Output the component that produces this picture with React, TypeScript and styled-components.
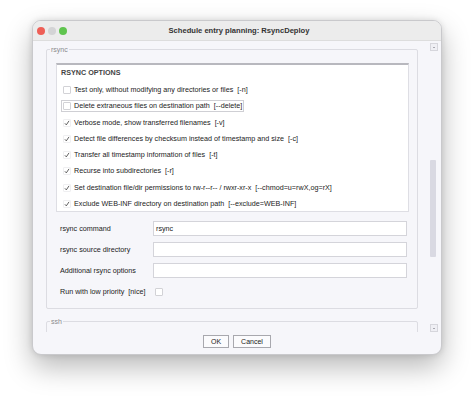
import React from 'react';
import styled, { createGlobalStyle } from 'styled-components';

const GlobalStyle = createGlobalStyle`
  html, body {
    margin: 0;
    padding: 0;
    background: #ffffff;
  }
  body {
    font-family: "Liberation Sans", Arial, sans-serif;
    color: #222;
  }
`;

const Stage = styled.div`
  width: 474px;
  height: 397px;
  padding: 20px 0 0 32px;
  box-sizing: border-box;
`;

const Window = styled.div`
  width: 410px;
  height: 335px;
  border-radius: 9px;
  overflow: hidden;
  border: 1px solid #c9c9cc;
  box-sizing: border-box;
  background: #f6f6fa;
  box-shadow: 0 12px 28px rgba(0, 0, 0, 0.28), 0 0 6px rgba(0, 0, 0, 0.12);
  display: flex;
  flex-direction: column;
`;

const TitleBar = styled.div`
  height: 19px;
  flex: none;
  background: #ececec;
  border-bottom: 1px solid #dddddd;
  display: flex;
  align-items: center;
  padding-left: 4px;
`;

const Lights = styled.div`
  display: flex;
  gap: 3px;
`;

const Light = styled.span<{ $c: string }>`
  width: 8px;
  height: 8px;
  border-radius: 50%;
  background: ${(p) => p.$c};
`;

const Title = styled.div`
  flex: 1;
  text-align: center;
  font-weight: bold;
  font-size: 7.6px;
  color: #333;
  margin-right: 30px;
`;

const Body = styled.div`
  flex: 1;
  display: flex;
  flex-direction: column;
  min-height: 0;
`;

const ScrollArea = styled.div`
  flex: 1;
  display: flex;
  min-height: 0;
  overflow: hidden;
`;

const Content = styled.div`
  flex: 1;
  padding: 8px 0 0 13px;
  display: flex;
  flex-direction: column;
  gap: 12px;
`;

const Group = styled.div`
  width: 372px;
  border: 1px solid #dcdce2;
  border-radius: 2px;
  position: relative;
  padding: 13px 8px 9px 9px;
  box-sizing: border-box;
  flex: none;
`;

const GroupLabel = styled.span`
  position: absolute;
  top: -5px;
  left: 3px;
  padding: 0 1px;
  background: #f6f6fa;
  font-size: 7px;
  color: #8a8a8e;
  line-height: 9px;
`;

const OptionsPanel = styled.div`
  background: #ffffff;
  border: 1px solid #dedee4;
  border-top: 2px solid #b8b8be;
  height: 149px;
  box-sizing: border-box;
  padding: 2px 4px 0 4px;
`;

const PanelTitle = styled.div`
  font-size: 7.2px;
  font-weight: bold;
  color: #444;
  height: 12px;
  line-height: 12px;
  margin-bottom: 5px;
`;

const OptionRow = styled.div<{ $focus?: boolean }>`
  display: flex;
  align-items: center;
  gap: 3px;
  height: 12px;
  box-sizing: border-box;
  margin-bottom: 4.3px;
  line-height: 10px;
  font-size: 7.2px;
  color: #222;
  width: fit-content;
  padding: 0 1px;
  border: 1px solid ${(p) => (p.$focus ? '#cfcfd4' : 'transparent')};
`;

const Box = styled.span<{ $on?: boolean }>`
  width: 8px;
  height: 8px;
  flex: none;
  box-sizing: border-box;
  border: 1px solid ${(p) => (p.$on ? '#efeff1' : '#d2d2d6')};
  border-radius: 1px;
  background: #fff;
  display: flex;
  align-items: center;
  justify-content: center;
`;

const Tick = () => (
  <svg width="6" height="6" viewBox="0 0 6 6">
    <path d="M0.9 3.3 L2.3 4.9 L5 0.9" fill="none" stroke="#444" strokeWidth="0.85" />
  </svg>
);

const Check = ({ on }: { on?: boolean }) => <Box $on={on}>{on && <Tick />}</Box>;

const Form = styled.div`
  display: grid;
  grid-template-columns: 93px 254px;
  row-gap: 6px;
  margin-top: 9px;
  padding-left: 4px;
  align-items: center;
`;

const FieldLabel = styled.div`
  font-size: 7.2px;
  color: #222;
  height: 15px;
  line-height: 15px;
  white-space: pre;
`;

const Input = styled.div`
  height: 15px;
  box-sizing: border-box;
  border: 1px solid #d4d4da;
  background: #fff;
  font-size: 7.2px;
  line-height: 13px;
  padding-left: 2px;
`;

const CheckCell = styled.div`
  padding-left: 2px;
  display: flex;
  align-items: center;
  height: 15px;
`;

const SshGroup = styled(Group)`
  height: 30px;
  padding: 0;
`;

const ScrollBar = styled.div`
  width: 14px;
  flex: none;
  display: flex;
  flex-direction: column;
  align-items: center;
  padding-top: 2px;
`;

const Arrow = styled.span`
  width: 6px;
  height: 6px;
  border: 1px solid #d6d6dc;
  background: #efeff4;
  display: flex;
  align-items: center;
  justify-content: center;
  flex: none;
`;

const Dot = styled.span`
  width: 2px;
  height: 1px;
  background: #a8a8b0;
`;

const Track = styled.div`
  flex: 1;
  width: 100%;
  display: flex;
  justify-content: center;
  padding-top: 109px;
  box-sizing: border-box;
`;

const Thumb = styled.div`
  width: 6px;
  height: 97px;
  margin-left: -2px;
  background: #d9d9e2;
  border-radius: 1px;
`;

const ButtonBar = styled.div`
  height: 22px;
  flex: none;
  display: flex;
  justify-content: center;
  align-items: flex-start;
  gap: 4px;
  padding-top: 3px;
  box-sizing: border-box;
`;

const Button = styled.button<{ $w: number }>`
  width: ${(p) => p.$w}px;
  height: 13px;
  padding: 0;
  border: 1px solid #a8a8ae;
  background: #fbfbfd;
  font-family: "Liberation Sans", Arial, sans-serif;
  font-size: 7px;
  color: #222;
  border-radius: 0;
`;

const OptionText = styled.span`
  white-space: pre;
`;

const options: { text: string; on: boolean; focus?: boolean }[] = [
  { text: 'Test only, without modifying any directories or files  [-n]', on: false },
  { text: 'Delete extraneous files on destination path  [--delete]', on: false, focus: true },
  { text: 'Verbose mode, show transferred filenames  [-v]', on: true },
  { text: 'Detect file differences by checksum instead of timestamp and size  [-c]', on: true },
  { text: 'Transfer all timestamp information of files  [-t]', on: true },
  { text: 'Recurse into subdirectories  [-r]', on: true },
  { text: 'Set destination file/dir permissions to rw-r--r-- / rwxr-xr-x  [--chmod=u=rwX,og=rX]', on: true },
  { text: 'Exclude WEB-INF directory on destination path  [--exclude=WEB-INF]', on: true },
];

export default function App() {
  return (
    <>
      <GlobalStyle />
      <Stage>
        <Window>
          <TitleBar>
            <Lights>
              <Light $c="#ee5f57" />
              <Light $c="#d4d4d6" />
              <Light $c="#5fc44e" />
            </Lights>
            <Title>Schedule entry planning: RsyncDeploy</Title>
          </TitleBar>
          <Body>
            <ScrollArea>
              <Content>
                <Group>
                  <GroupLabel>rsync</GroupLabel>
                  <OptionsPanel>
                    <PanelTitle>RSYNC OPTIONS</PanelTitle>
                    {options.map((o) => (
                      <OptionRow key={o.text} $focus={o.focus}>
                        <Check on={o.on} />
                        <OptionText>{o.text}</OptionText>
                      </OptionRow>
                    ))}
                  </OptionsPanel>
                  <Form>
                    <FieldLabel>rsync command</FieldLabel>
                    <Input>rsync</Input>
                    <FieldLabel>rsync source directory</FieldLabel>
                    <Input />
                    <FieldLabel>Additional rsync options</FieldLabel>
                    <Input />
                    <FieldLabel>Run with low priority  [nice]</FieldLabel>
                    <CheckCell>
                      <Check />
                    </CheckCell>
                  </Form>
                </Group>
                <SshGroup>
                  <GroupLabel>ssh</GroupLabel>
                </SshGroup>
              </Content>
              <ScrollBar>
                <Arrow>
                  <Dot />
                </Arrow>
                <Track>
                  <Thumb />
                </Track>
                <Arrow>
                  <Dot />
                </Arrow>
              </ScrollBar>
            </ScrollArea>
            <ButtonBar>
              <Button $w={26}>OK</Button>
              <Button $w={38}>Cancel</Button>
            </ButtonBar>
          </Body>
        </Window>
      </Stage>
    </>
  );
}
